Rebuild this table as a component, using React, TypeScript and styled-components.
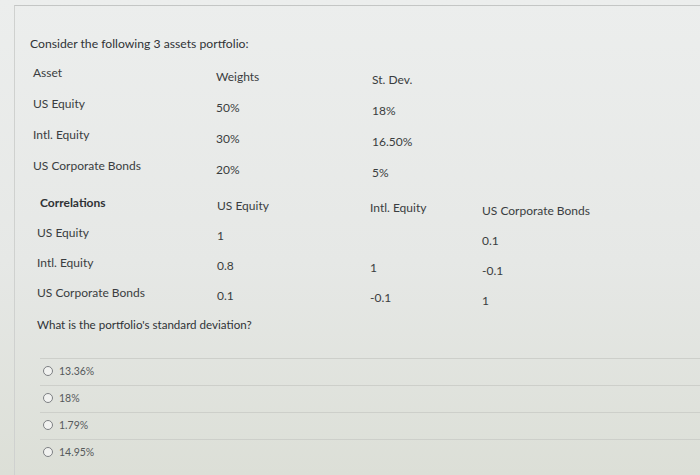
import styled, { createGlobalStyle } from "styled-components";

const GlobalStyle = createGlobalStyle`
  html, body {
    margin: 0;
    padding: 0;
  }
  body {
    width: 700px;
    height: 475px;
    overflow: hidden;
    background: linear-gradient(180deg, #eceeed 0%, #e6e8e6 55%, #dcdfd7 100%);
    font-family: Lato, "Open Sans", sans-serif;
    color: #3a3d40;
  }
`;

const Page = styled.div`
  margin: 5px 0 0 14px;
  height: 470px;
  border-top: 1px solid #c4c6c5;
  border-left: 1px solid #cfd1cf;
  padding: 30px 0 0 15px;
  box-sizing: border-box;
`;

const Intro = styled.p`
  margin: 0;
  font-size: 12.2px;
  line-height: 16px;
  color: #303336;
`;

const Table = styled.div<{ cols: string; rowH: number; left: number }>`
  display: grid;
  grid-template-columns: ${(p) => p.cols};
  grid-auto-rows: ${(p) => p.rowH}px;
  padding-left: ${(p) => p.left}px;
  font-size: 12px;
  line-height: 16px;
`;

const Cell = styled.div<{ drop?: number; bold?: boolean; indent?: number }>`
  padding-top: ${(p) => p.drop ?? 0}px;
  padding-left: ${(p) => p.indent ?? 0}px;
  font-weight: ${(p) => (p.bold ? 700 : 400)};
  color: ${(p) => (p.bold ? "#2f3235" : "#3a3d40")};
  white-space: nowrap;
`;

const Question = styled.p`
  margin: 2px 0 0 7px;
  font-size: 11.6px;
  line-height: 16px;
  color: #303336;
`;

const Options = styled.div`
  margin: 25px 0 0 10px;
`;

const Option = styled.label`
  display: flex;
  align-items: center;
  gap: 6px;
  height: 27px;
  box-sizing: border-box;
  padding: 0 0 3px 3px;
  border-top: 1px solid #cdcfca;
  font-size: 10.5px;
  color: #55595b;
`;

const Radio = styled.span`
  width: 8px;
  height: 8px;
  border-radius: 50%;
  border: 1px solid #7d8083;
  background: #f1f2f0;
`;

const assets = [
  ["Asset", "Weights", "St. Dev."],
  ["US Equity", "50%", "18%"],
  ["Intl. Equity", "30%", "16.50%"],
  ["US Corporate Bonds", "20%", "5%"],
];

const correlations = [
  ["Correlations", "US Equity", "Intl. Equity", "US Corporate Bonds"],
  ["US Equity", "1", "", "0.1"],
  ["Intl. Equity", "0.8", "1", "-0.1"],
  ["US Corporate Bonds", "0.1", "-0.1", "1"],
];

const answers = ["13.36%", "18%", "1.79%", "14.95%"];

// the photo is slightly tilted, so columns to the right sit a little lower
const assetDrop = [0, 4, 7];
const corrDrop = [0, 3, 5, 8];

export default function App() {
  return (
    <>
      <GlobalStyle />
      <Page>
        <Intro>Consider the following 3 assets portfolio:</Intro>
        <Table cols="183px 156px 1fr" rowH={31} left={3} style={{ marginTop: 13 }}>
          {assets.map((row, r) =>
            row.map((text, c) => (
              <Cell key={`${r}-${c}`} drop={assetDrop[c]}>
                {text}
              </Cell>
            ))
          )}
        </Table>
        <Table cols="180px 153px 112px 1fr" rowH={30} left={7} style={{ marginTop: 6 }}>
          {correlations.map((row, r) =>
            row.map((text, c) => (
              <Cell
                key={`${r}-${c}`}
                drop={corrDrop[c]}
                bold={r === 0 && c === 0}
                indent={r === 0 && c === 0 ? 3 : 0}
              >
                {text}
              </Cell>
            ))
          )}
        </Table>
        <Question>What is the portfolio's standard deviation?</Question>
        <Options>
          {answers.map((a) => (
            <Option key={a}>
              <Radio />
              {a}
            </Option>
          ))}
        </Options>
      </Page>
    </>
  );
}
